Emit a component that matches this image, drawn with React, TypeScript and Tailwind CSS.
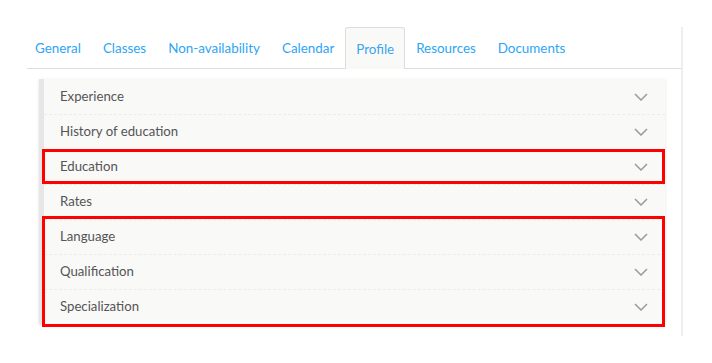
const tabs = [
  "General",
  "Classes",
  "Non-availability",
  "Calendar",
  "Profile",
  "Resources",
  "Documents",
];

const sections = [
  "Experience",
  "History of education",
  "Education",
  "Rates",
  "Language",
  "Qualification",
  "Specialization",
];

function Chevron() {
  return (
    <svg width="14" height="8" viewBox="0 0 14 8" fill="none" className="text-[#9a9a9a]">
      <path d="M1 1l6 6 6-6" stroke="currentColor" strokeWidth="1.5" />
    </svg>
  );
}

export default function App() {
  return (
    <div className="w-[712px] h-[363px] bg-white pt-[27px] pl-[27px] font-['Lato',sans-serif]">
      <div className="w-[656px] h-[309px] border-r-2 border-[#eeeeee]">
        <div className="flex h-[42px] border-b border-[#dddddd]">
          <div className="flex -ml-[3px]">
            {tabs.map((t) => (
              <div
                key={t}
                className={
                  t === "Profile"
                    ? "h-[42px] px-[10px] pt-[2px] flex items-center text-[13.4px] text-[#3aa5ee] bg-[#f9f9f8] border border-b-0 border-[#dddddd] rounded-t-[3px]"
                    : "h-[41px] px-[11px] pt-[2px] flex items-center text-[13.4px] text-[#2ea5f5]"
                }
              >
                {t}
              </div>
            ))}
          </div>
        </div>

        <div className="relative ml-[12px] mr-[16px] mt-[10px] bg-[#f9f9f8] border-l-[5px] border-[#e6e6e6] shadow-[0_1px_3px_rgba(0,0,0,0.12)]">
          {sections.map((s, i) => (
            <div
              key={s}
              className={
                "h-[35px] flex items-center justify-between pl-[16px] pr-[17px] text-[13.2px] text-[#555555] " +
                (i > 0 ? "border-t border-dashed border-[#ececec]" : "")
              }
            >
              <span>{s}</span>
              <Chevron />
            </div>
          ))}

          <div className="absolute left-[-2px] right-0 top-[70px] h-[35px] border-[3px] border-[#ff0000] pointer-events-none" />
          <div className="absolute left-[-2px] right-0 top-[137px] h-[111px] border-[3px] border-[#ff0000] pointer-events-none" />
        </div>
      </div>
    </div>
  );
}
